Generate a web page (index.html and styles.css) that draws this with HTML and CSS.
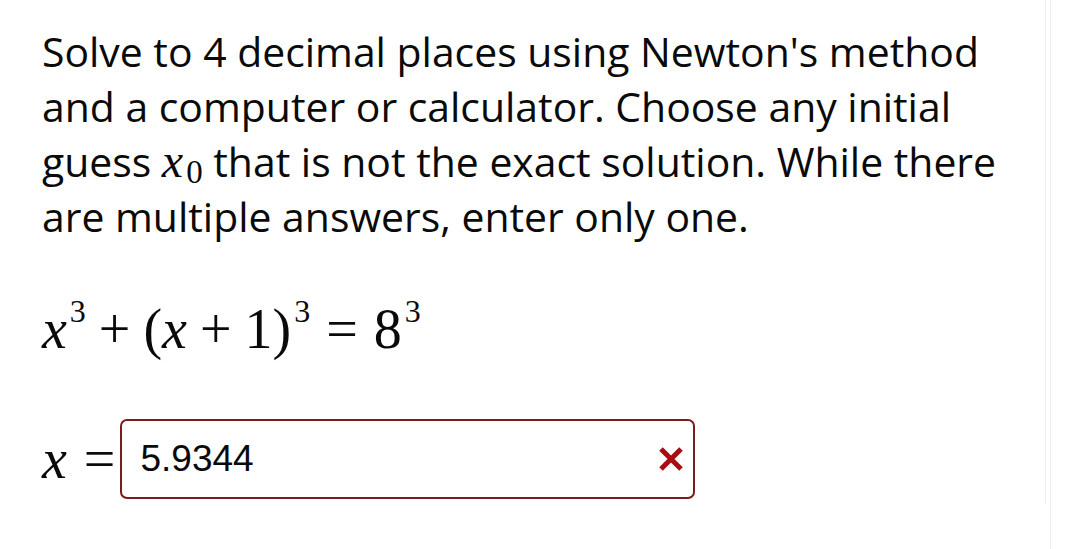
FILE: index.html
```html
<!DOCTYPE html>
<html>
<head>
<meta charset="utf-8">
<link rel="stylesheet" href="styles.css">
</head>
<body>
<div class="frame">
  <div class="panel">
    <p class="prompt">Solve to 4 decimal places using Newton's method and a computer or calculator. Choose any initial guess <span class="imath"><i class="mi">x</i><span class="sub">0</span></span> that is not the exact solution. While there are multiple answers, enter only one.</p>
    <div class="eq"><i class="mi">x</i><sup class="sup">3</sup><span class="bin">+</span><span class="mo">(</span><i class="mi">x</i><span class="bin">+</span><span class="mn">1</span><span class="mo">)</span><sup class="sup">3</sup><span class="rel">=</span><span class="mn">8</span><sup class="sup">3</sup></div>
    <div class="answer-row">
      <div class="answer-label"><i class="mi">x</i><span class="rel rel-tight">=</span></div>
      <div class="answer-box">
        <span class="answer-value">5.9344</span>
        <svg class="wrong" width="26" height="26" viewBox="0 0 26 26" aria-label="incorrect">
          <path d="M3 3 L23 23 M23 3 L3 23" stroke="#a50f0f" stroke-width="5" stroke-linecap="butt"/>
        </svg>
      </div>
    </div>
  </div>
  <div class="rail"></div>
</div>
</body>
</html>
```
FILE: styles.css
```css
html, body {
  margin: 0;
  padding: 0;
  background: #ffffff;
}

.frame {
  display: flex;
  height: 549px;
  overflow: hidden;
}

.panel {
  width: 1046px;
  box-sizing: border-box;
  padding: 24px 30px 0 42px;
  border-right: 1px solid #efefef;
  height: 504px;
}

.rail {
  width: 1px;
  margin-left: 4px;
  background: #eeeeee;
  height: 549px;
}

.prompt {
  margin: 0;
  font-family: "Open Sans", sans-serif;
  font-size: 40.9px;
  line-height: 55px;
  color: #0a0a0a;
}

.imath {
  font-family: "Liberation Serif", serif;
  font-size: 48px;
  line-height: 0;
}

.mi {
  font-family: "Liberation Serif", serif;
  font-style: italic;
}

.sub {
  font-size: 33px;
  position: relative;
  top: 6px;
  margin-left: 3px;
  line-height: 0;
}

.eq {
  margin-top: 55px;
  font-family: "Liberation Serif", serif;
  font-size: 56px;
  line-height: 60px;
  color: #0a0a0a;
}

.sup {
  font-size: 32px;
  vertical-align: 26px;
  line-height: 0;
  margin-left: 3px;
}

.bin {
  margin: 0 13px;
}

.rel {
  margin: 0 16px;
}

.rel-tight {
  margin: 0 5px 0 17px;
}

.answer-row {
  display: flex;
  align-items: center;
  margin-top: 60px;
}

.answer-label {
  font-family: "Liberation Serif", serif;
  font-size: 56px;
  line-height: 60px;
  color: #0a0a0a;
}

.answer-box {
  width: 575px;
  height: 80px;
  box-sizing: border-box;
  border: 2px solid #7b1a1f;
  border-radius: 7px;
  display: flex;
  align-items: center;
  justify-content: space-between;
  padding: 0 9px 0 18px;
}

.answer-value {
  font-family: "Liberation Sans", Arial, sans-serif;
  font-size: 37px;
  color: #0a0a0a;
}

.wrong {
  display: block;
}
```
